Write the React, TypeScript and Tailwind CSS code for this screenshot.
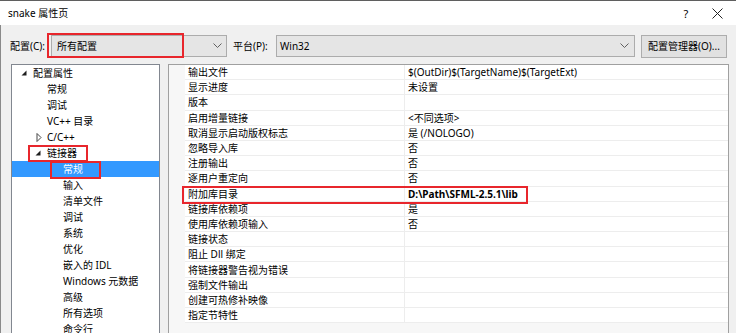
import React from 'react';

const FONT = { fontFamily: '"Noto Sans", "Noto Sans CJK SC", sans-serif' };

interface TreeItem {
  label: string;
  pad: number;
  glyph?: 'open' | 'closed';
  selected?: boolean;
}

const treeItems: TreeItem[] = [
  { label: '配置属性', pad: 21, glyph: 'open' },
  { label: '常规', pad: 35 },
  { label: '调试', pad: 35 },
  { label: 'VC++ 目录', pad: 35 },
  { label: 'C/C++', pad: 35, glyph: 'closed' },
  { label: '链接器', pad: 35, glyph: 'open' },
  { label: '常规', pad: 51, selected: true },
  { label: '输入', pad: 51 },
  { label: '清单文件', pad: 51 },
  { label: '调试', pad: 51 },
  { label: '系统', pad: 51 },
  { label: '优化', pad: 51 },
  { label: '嵌入的 IDL', pad: 51 },
  { label: 'Windows 元数据', pad: 51 },
  { label: '高级', pad: 51 },
  { label: '所有选项', pad: 51 },
  { label: '命令行', pad: 51 },
];

const rows: { name: string; value: string; bold?: boolean }[] = [
  { name: '输出文件', value: '$(OutDir)$(TargetName)$(TargetExt)' },
  { name: '显示进度', value: '未设置' },
  { name: '版本', value: '' },
  { name: '启用增量链接', value: '<不同选项>' },
  { name: '取消显示启动版权标志', value: '是 (/NOLOGO)' },
  { name: '忽略导入库', value: '否' },
  { name: '注册输出', value: '否' },
  { name: '逐用户重定向', value: '否' },
  { name: '附加库目录', value: 'D:\\Path\\SFML-2.5.1\\lib', bold: true },
  { name: '链接库依赖项', value: '是' },
  { name: '使用库依赖项输入', value: '否' },
  { name: '链接状态', value: '' },
  { name: '阻止 Dll 绑定', value: '' },
  { name: '将链接器警告视为错误', value: '' },
  { name: '强制文件输出', value: '' },
  { name: '创建可热修补映像', value: '' },
  { name: '指定节特性', value: '' },
];

const Chevron = () => (
  <svg width="9" height="6" viewBox="0 0 9 6" className="shrink-0">
    <path d="M0.5 0.5 L4.5 4.5 L8.5 0.5" fill="none" stroke="#606060" strokeWidth="1" />
  </svg>
);

const Glyph: React.FC<{ kind: 'open' | 'closed' }> = ({ kind }) =>
  kind === 'open' ? (
    <svg width="6" height="6" viewBox="0 0 6 6">
      <path d="M5.5 0.5 L5.5 5.5 L0.5 5.5 Z" fill="#1e1e1e" />
    </svg>
  ) : (
    <svg width="6" height="9" viewBox="0 0 6 9">
      <path d="M1 0.5 L5 4.5 L1 8.5 Z" fill="none" stroke="#444" strokeWidth="1" />
    </svg>
  );

export default function App() {
  return (
    <div
      className="relative w-[736px] h-[333px] overflow-hidden bg-[#f0f0f0] text-[10px] text-black"
      style={FONT}
    >
      {/* title bar */}
      <div className="h-[25px] bg-white border-t border-[#5f5f5f] flex items-center justify-between pl-[8px]">
        <span className="leading-none whitespace-nowrap">snake 属性页</span>
        <div className="flex items-center">
          <span className="w-[24px] text-center text-[11px] leading-none">?</span>
          <svg width="11" height="11" viewBox="0 0 11 11" className="ml-[14px] mr-[13px]">
            <path d="M0.5 0.5 L10.5 10.5 M10.5 0.5 L0.5 10.5" stroke="#222" strokeWidth="1" />
          </svg>
        </div>
      </div>

      <div className="border-l border-[#8a8a8a] h-full">
        {/* configuration row */}
        <div className="flex items-center pt-[10px] pl-[9px] h-[32px]">
          <span className="w-[41px] leading-none whitespace-nowrap">配置(C):</span>
          <div className="w-[176px] h-[22px] bg-[#e5e5e5] border border-[#acacac] flex items-center justify-between pl-[5px] pr-[4px]">
            <span className="leading-none whitespace-nowrap">所有配置</span>
            <Chevron />
          </div>
          <span className="ml-[6px] w-[43px] leading-none whitespace-nowrap">平台(P):</span>
          <div className="w-[359px] h-[22px] bg-[#e5e5e5] border border-[#acacac] flex items-center justify-between pl-[3px] pr-[5px]">
            <span className="leading-none whitespace-nowrap">Win32</span>
            <Chevron />
          </div>
          <div className="ml-[6px] w-[86px] h-[23px] bg-[#e1e1e1] border border-[#adadad] flex items-center justify-center">
            <span className="leading-none whitespace-nowrap">配置管理器(O)...</span>
          </div>
        </div>

        {/* panels */}
        <div className="flex mt-[7px] pl-[10px] gap-[8px]">
          {/* tree */}
          <div className="relative w-[149px] h-[300px] bg-white border border-[#828790]">
            {treeItems.map((it, i) => (
              <div
                key={i}
                className={`relative h-[16px] flex items-center ${it.selected ? 'bg-[#3399ff] text-white' : ''}`}
                style={{ paddingLeft: it.pad }}
              >
                {it.glyph && (
                  <span
                    className="absolute flex items-center"
                    style={{ left: it.glyph === 'closed' ? 24 : it.pad - 12 }}
                  >
                    <Glyph kind={it.glyph} />
                  </span>
                )}
                <span className="leading-none whitespace-nowrap">{it.label}</span>
              </div>
            ))}
            <div className="absolute left-[16px] top-[80px] w-[60px] h-[17px] border-2 border-[#e8262c]" />
            <div className="absolute left-[38px] top-[96px] w-[51px] h-[18px] border-2 border-[#e8262c]" />
          </div>

          {/* property grid */}
          <div className="relative w-[561px] h-[300px] bg-[#f7f7f7] border border-[#a0a0a0] pl-[16px]">
            {rows.map((r, i) => (
              <div key={i} className="flex h-[15.2px] bg-white border-b border-[#ededed]">
                <div className="w-[220px] pl-[3px] flex items-center border-r border-[#ededed]">
                  <span className="leading-none whitespace-nowrap">{r.name}</span>
                </div>
                <div className="flex-1 pl-[3px] flex items-center">
                  <span className={`leading-none whitespace-nowrap ${r.bold ? 'font-bold' : ''}`}>{r.value}</span>
                </div>
              </div>
            ))}
            <div className="absolute left-[13px] top-[121px] w-[346px] h-[18px] border-2 border-[#e8262c]" />
          </div>
        </div>
      </div>

      {/* red highlight on configuration combobox */}
      <div className="absolute left-[47px] top-[33px] w-[137px] h-[25px] border-2 border-[#e8262c]" />
    </div>
  );
}
